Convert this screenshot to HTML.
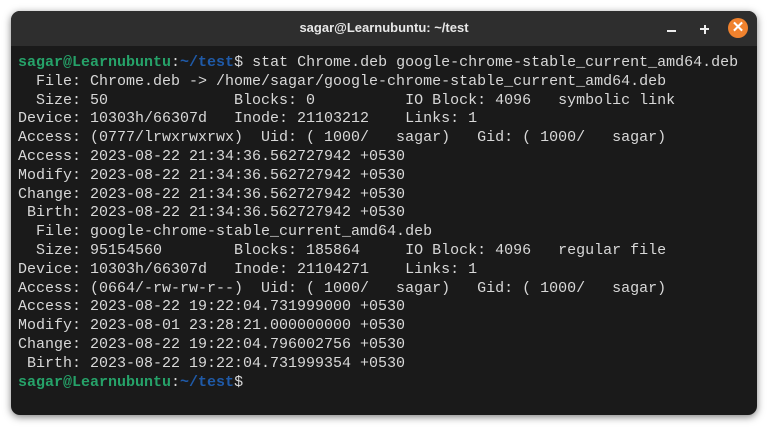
<!DOCTYPE html>
<html><head><style>
body{margin:0;width:769px;height:429px;background:#fff;overflow:hidden;position:relative}
.win{position:absolute;left:11px;top:11px;width:746px;height:404px;border-radius:9px;background:#1a1a1a;box-shadow:0 2px 8px rgba(0,0,0,.5);overflow:hidden}
.tb{position:absolute;left:0;top:0;width:746px;height:35px;background:#2e2e2e}
.title{position:absolute;left:0;right:0;top:9px;text-align:center;color:#e8e8e8;font:bold 13px "Liberation Sans",sans-serif}
pre{position:absolute;left:7px;top:43px;margin:0;font:15px/18.8px "Liberation Mono",monospace;color:#d8d8d8}
.g{color:#26a269;font-weight:bold}.b{color:#1f5aa8;font-weight:bold}
</style></head><body>
<div class="win">
<div class="tb"><div class="title">sagar@Learnubuntu: ~/test</div>
<div style="position:absolute;left:656px;top:19px;width:9px;height:2px;background:#eee"></div>
<div style="position:absolute;left:689px;top:17px;width:9px;height:2px;background:#eee"></div>
<div style="position:absolute;left:692.5px;top:13.5px;width:2px;height:9px;background:#eee"></div>
<div style="position:absolute;left:717px;top:7px;width:20px;height:20px;border-radius:50%;background:#f0822e;color:#fff;font:bold 15px/20px 'Liberation Sans',sans-serif;text-align:center">✕</div>
</div>
<pre><span class="g">sagar@Learnubuntu</span>:<span class="b">~/test</span>$ stat Chrome.deb google-chrome-stable_current_amd64.deb
  File: Chrome.deb -&gt; /home/sagar/google-chrome-stable_current_amd64.deb
  Size: 50              Blocks: 0          IO Block: 4096   symbolic link
Device: 10303h/66307d   Inode: 21103212    Links: 1
Access: (0777/lrwxrwxrwx)  Uid: ( 1000/   sagar)   Gid: ( 1000/   sagar)
Access: 2023-08-22 21:34:36.562727942 +0530
Modify: 2023-08-22 21:34:36.562727942 +0530
Change: 2023-08-22 21:34:36.562727942 +0530
 Birth: 2023-08-22 21:34:36.562727942 +0530
  File: google-chrome-stable_current_amd64.deb
  Size: 95154560        Blocks: 185864     IO Block: 4096   regular file
Device: 10303h/66307d   Inode: 21104271    Links: 1
Access: (0664/-rw-rw-r--)  Uid: ( 1000/   sagar)   Gid: ( 1000/   sagar)
Access: 2023-08-22 19:22:04.731999000 +0530
Modify: 2023-08-01 23:28:21.000000000 +0530
Change: 2023-08-22 19:22:04.796002756 +0530
 Birth: 2023-08-22 19:22:04.731999354 +0530
<span class="g">sagar@Learnubuntu</span>:<span class="b">~/test</span>$</pre>
</div>
</body></html>
